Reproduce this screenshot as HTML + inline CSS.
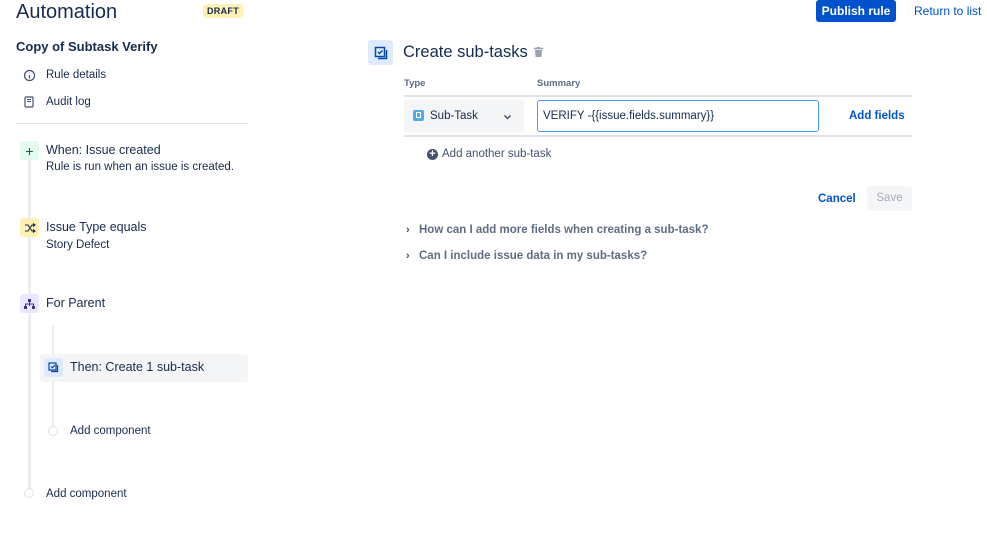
<!DOCTYPE html>
<html><head><meta charset="utf-8"><style>
*{box-sizing:border-box;margin:0;padding:0}
body{width:987px;height:534px;background:#fff;font-family:"Liberation Sans",sans-serif;color:#172b4d;position:relative;overflow:hidden}
.a{position:absolute;white-space:nowrap}
.ico{position:absolute;width:19px;height:19px;border-radius:3px;display:flex;align-items:center;justify-content:center}
</style></head><body>
<div class="a" style="left:16px;top:0px;font-size:20px;line-height:24px">Automation</div>
<div class="a" style="left:203px;top:4px;background:#fff0b3;color:#172b4d;font-size:9px;font-weight:bold;padding:2px 4px;border-radius:3px;letter-spacing:.3px">DRAFT</div>
<div class="a" style="left:816px;top:0;width:80px;height:22px;background:#0052cc;color:#fff;font-weight:bold;font-size:12px;text-align:center;line-height:22px;border-radius:3px">Publish rule</div>
<div class="a" style="left:914px;top:4px;color:#0052cc;font-size:12px">Return to list</div>

<div class="a" style="left:16px;top:39px;font-size:13px;font-weight:bold">Copy of Subtask Verify</div>
<svg class="a" style="left:23px;top:69px" width="13" height="13" viewBox="0 0 13 13"><circle cx="6.5" cy="6.5" r="5" fill="none" stroke="#42526e" stroke-width="1.2"/><path d="M6.5 6v3.5M6.5 3.8v.4" stroke="#42526e" stroke-width="1.3"/></svg>
<div class="a" style="left:46px;top:69px;font-size:11.5px">Rule details</div>
<svg class="a" style="left:24px;top:96px" width="10" height="12" viewBox="0 0 10 12"><rect x="1" y="1" width="8" height="10" rx="1" fill="none" stroke="#42526e" stroke-width="1.2"/><path d="M3 3.5h4M3 5.5h4" stroke="#42526e"/></svg>
<div class="a" style="left:46px;top:96px;font-size:11.5px">Audit log</div>
<div class="a" style="left:16px;top:123px;width:232px;height:1px;background:#dfe1e6"></div>

<div class="a" style="left:28px;top:160px;width:3px;height:330px;background:#ebecf0"></div>
<div class="a" style="left:52px;top:325px;width:2px;height:103px;background:#ebecf0"></div>

<div class="ico" style="left:20px;top:141px;background:#e3fcef;color:#006644;font-size:14px">+</div>
<div class="a" style="left:46px;top:143px;font-size:12.5px">When: Issue created</div>
<div class="a" style="left:46px;top:161px;font-size:11.5px">Rule is run when an issue is created.</div>

<div class="ico" style="left:20px;top:218px;background:#fff0b3"><svg width="12" height="10" viewBox="0 0 12 10"><path d="M1 2h3l4 6h3M1 8h3l4-6h3M9 .5l2 1.5-2 1.5M9 6.5l2 1.5-2 1.5" fill="none" stroke="#172b4d" stroke-width="1.1"/></svg></div>
<div class="a" style="left:46px;top:220px;font-size:12.5px">Issue Type equals</div>
<div class="a" style="left:46px;top:239px;font-size:11.5px">Story Defect</div>

<div class="ico" style="left:20px;top:294px;background:#eae6ff"><svg width="11" height="10" viewBox="0 0 11 10"><rect x="4" y="0" width="3" height="3" fill="#403294"/><rect x="0" y="7" width="3" height="3" fill="#403294"/><rect x="8" y="7" width="3" height="3" fill="#403294"/><path d="M5.5 3v2M1.5 7V5h8v2M5.5 5v2" fill="none" stroke="#403294"/></svg></div>
<div class="a" style="left:46px;top:296px;font-size:12.5px">For Parent</div>

<div class="a" style="left:40px;top:354px;width:208px;height:28px;background:#f4f5f7;border-radius:3px"></div>
<div class="ico" style="left:44px;top:358px;background:#deebff"><svg width="11" height="11" viewBox="0 0 11 11"><rect x="1" y="1" width="7" height="7" fill="none" stroke="#0747a6" stroke-width="1.2"/><path d="M3 4.5l1.3 1.3L7 3M9.5 3v6.5H3" fill="none" stroke="#0747a6" stroke-width="1.2"/></svg></div>
<div class="a" style="left:70px;top:360px;font-size:12.5px">Then: Create 1 sub-task</div>

<div class="a" style="left:48px;top:426px;width:10px;height:10px;border:1.5px solid #dfe1e6;border-radius:50%;background:#fff"></div>
<div class="a" style="left:70px;top:425px;font-size:11.5px">Add component</div>
<div class="a" style="left:24px;top:488px;width:10px;height:10px;border:1.5px solid #dfe1e6;border-radius:50%;background:#fff"></div>
<div class="a" style="left:46px;top:488px;font-size:11.5px">Add component</div>

<div class="a" style="left:368px;top:40px;width:25px;height:25px;background:#deebff;border-radius:3px;display:flex;align-items:center;justify-content:center"><svg width="14" height="14" viewBox="0 0 14 14"><rect x="1.5" y="1.5" width="9" height="9" fill="none" stroke="#0747a6" stroke-width="1.5"/><path d="M4 6l1.5 1.5L8.5 4.5M12.5 4v8.5H4" fill="none" stroke="#0747a6" stroke-width="1.5"/></svg></div>
<div class="a" style="left:403px;top:43px;font-size:16.5px">Create sub-tasks</div>
<svg class="a" style="left:534px;top:47px" width="9" height="10" viewBox="0 0 9 10"><path d="M0 1.5h9M3 0h3" stroke="#97a0af" stroke-width="1.4"/><path d="M1 3h7l-.6 7H1.6z" fill="#97a0af"/></svg>

<div class="a" style="left:404px;top:78px;font-size:9.5px;font-weight:bold;color:#5e6c84">Type</div>
<div class="a" style="left:537px;top:78px;font-size:9.5px;font-weight:bold;color:#5e6c84">Summary</div>
<div class="a" style="left:404px;top:95px;width:508px;height:2px;background:#dfe1e6"></div>
<div class="a" style="left:404px;top:100px;width:120px;height:32px;background:#f4f5f7;border-radius:3px"></div>
<div class="a" style="left:413px;top:110px;width:11px;height:11px;background:#4bade8;border-radius:2px"><div style="position:absolute;left:3px;top:2px;width:5px;height:6px;border:1px solid #fff"></div></div>
<div class="a" style="left:430px;top:110px;font-size:11.5px">Sub-Task</div>
<svg class="a" style="left:503px;top:114px" width="9" height="6" viewBox="0 0 9 6"><path d="M1.5 1.5l3 3 3-3" fill="none" stroke="#42526e" stroke-width="1.5"/></svg>
<div class="a" style="left:537px;top:100px;width:282px;height:32px;border:1.5px solid #4c9aff;border-radius:3px;background:#fff"></div>
<div class="a" style="left:543px;top:110px;font-size:11.5px">VERIFY -{{issue.fields.summary}}</div>
<div class="a" style="left:849px;top:110px;font-size:11.5px;font-weight:bold;color:#0052cc">Add fields</div>
<div class="a" style="left:404px;top:135px;width:508px;height:2px;background:#dfe1e6"></div>
<div class="a" style="left:427px;top:149px;width:11px;height:11px;border-radius:50%;background:#42526e;color:#fff;font-size:11px;line-height:11px;text-align:center;font-weight:bold">+</div>
<div class="a" style="left:442px;top:148px;font-size:11.5px;color:#42526e">Add another sub-task</div>

<div class="a" style="left:818px;top:193px;font-size:11.5px;font-weight:bold;color:#0052cc">Cancel</div>
<div class="a" style="left:867px;top:186px;width:45px;height:25px;background:#f4f5f7;border-radius:3px;color:#a5adba;font-size:11.5px;text-align:center;line-height:25px">Save</div>

<div class="a" style="left:406px;top:224px;font-size:11px;color:#42526e;font-weight:bold">›</div>
<div class="a" style="left:419px;top:224px;font-size:11.5px;color:#5e6c84;font-weight:bold">How can I add more fields when creating a sub-task?</div>
<div class="a" style="left:406px;top:250px;font-size:11px;color:#42526e;font-weight:bold">›</div>
<div class="a" style="left:419px;top:250px;font-size:11.5px;color:#5e6c84;font-weight:bold">Can I include issue data in my sub-tasks?</div>
</body></html>
